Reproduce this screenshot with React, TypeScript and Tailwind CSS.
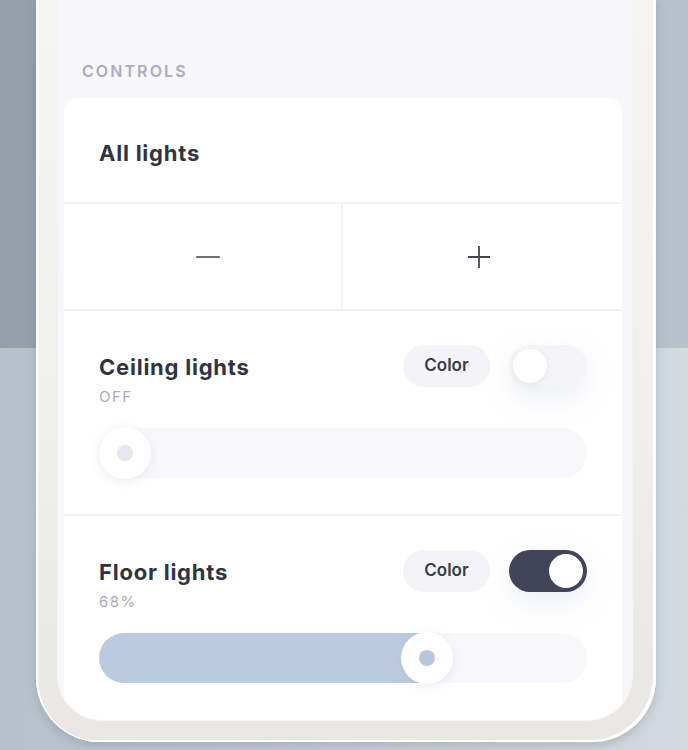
import { useState } from 'react';

const font = { fontFamily: 'Inter, "Noto Sans", sans-serif' };

function Toggle({ on }: { on: boolean }) {
    return (
        <div
            className={`flex items-center w-[78px] h-[42px] rounded-full p-[4px] shadow-[0_10px_28px_rgba(170,176,200,0.22)] ${on ? 'bg-[#42455a] justify-end' : 'bg-[#f5f5f8] justify-start'}`}
        >
            <div className={`w-[34px] h-[34px] rounded-full bg-white ${on ? '' : 'shadow-[0_2px_6px_rgba(180,184,204,0.25)]'}`} />
        </div>
    );
}

function Slider({ value }: { value: number }) {
    const width = 483;
    const pos = Math.max(26, (value / 100) * width);
    return (
        <div className="relative h-[50px] w-full rounded-full bg-[#f8f8fb]">
            {value > 0 && (
                <div className="absolute left-0 top-0 h-full rounded-l-full bg-[#bccadf]" style={{ width: pos }} />
            )}
            <div
                className="absolute top-[-1px] w-[52px] h-[52px] rounded-full bg-white flex items-center justify-center shadow-[0_2px_10px_rgba(170,176,200,0.25)]"
                style={{ left: pos - 26 }}
            >
                <div className={`w-[16px] h-[16px] rounded-full ${value > 0 ? 'bg-[#b6c5dc]' : 'bg-[#e6e7ee]'}`} />
            </div>
        </div>
    );
}

function LightRow({ name, status, on, value }: { name: string; status: string; on: boolean; value: number }) {
    return (
        <div className="px-[35px] pt-[34px] pb-[36px]">
            <div className="flex items-start justify-between">
                <div className="pt-[9px]">
                    <div className="text-[22px] leading-[26px] font-bold text-[#31333f] tracking-[0.035em]">{name}</div>
                    <div className="mt-[7px] text-[15px] leading-[20px] text-[#a9abc3] tracking-[0.1em]">{status}</div>
                </div>
                <div className="flex items-center gap-[19px]">
                    <button className="h-[42px] w-[87px] rounded-full bg-[#f4f4f8] text-[17px] font-semibold text-[#3a3c4a]">
                        Color
                    </button>
                    <Toggle on={on} />
                </div>
            </div>
            <div className="mt-[21px]">
                <Slider value={value} />
            </div>
        </div>
    );
}

export default function App() {
    const [lights] = useState([
        { name: 'Ceiling lights', status: 'OFF', on: false, value: 0 },
        { name: 'Floor lights', status: '68%', on: true, value: 68 },
    ]);

    return (
        <div className="relative w-[688px] h-[750px] overflow-hidden" style={font}>
            {/* backdrop */}
            <div className="absolute inset-0 flex flex-col">
                <div className="h-[348px] bg-gradient-to-r from-[#929eaa] to-[#b9c2ca]" />
                <div className="flex-1 bg-gradient-to-r from-[#b6c1ca] to-[#d2d9df]" />
            </div>

            {/* phone */}
            <div className="relative ml-[36px] w-[620px] h-[742px] rounded-b-[64px] bg-gradient-to-b from-[#f6f5f3] via-[#f1f0ed] to-[#e8e7e3] pl-[22px] pr-[24px] pb-[22px] shadow-[inset_2px_0_0_#ffffff,inset_-3px_-2px_0_#ffffff,0_4px_10px_rgba(90,100,115,0.25)]">
                <div className="h-full rounded-b-[44px] bg-[#f7f7fa] overflow-hidden flex flex-col shadow-[0_0_0_1px_#f4f3f0]">
                    <div className="pt-[62px] pl-[24px] text-[16px] leading-[18px] font-semibold tracking-[0.13em] text-[#a9abc3]">
                        CONTROLS
                    </div>
                    <div className="mt-[18px] ml-[6px] mr-[10px] flex-1 rounded-t-[14px] bg-white flex flex-col">
                        <div className="h-[104px] px-[35px] pt-[6px] flex items-center text-[22px] font-bold text-[#31333f] tracking-[0.035em]">
                            All lights
                        </div>
                        <div className="h-[2px] bg-[#f1f2f6]" />
                        <div className="h-[105px] grid grid-cols-2">
                            <button className="flex items-center justify-center pl-[10px] border-r-2 border-[#f3f4f7]">
                                <div className="w-[24px] h-[2px] rounded-full bg-[#6c6e80]" />
                            </button>
                            <button className="flex items-center justify-center pr-[8px]">
                                <svg width="24" height="24" viewBox="0 0 24 24" fill="none" stroke="#434657" strokeWidth="1.8">
                                    <path d="M12 1v22M1 12h22" />
                                </svg>
                            </button>
                        </div>
                        {lights.map((l) => (
                            <div key={l.name}>
                                <div className="h-[2px] bg-[#f1f2f6]" />
                                <LightRow {...l} />
                            </div>
                        ))}
                    </div>
                </div>
            </div>
        </div>
    );
}
